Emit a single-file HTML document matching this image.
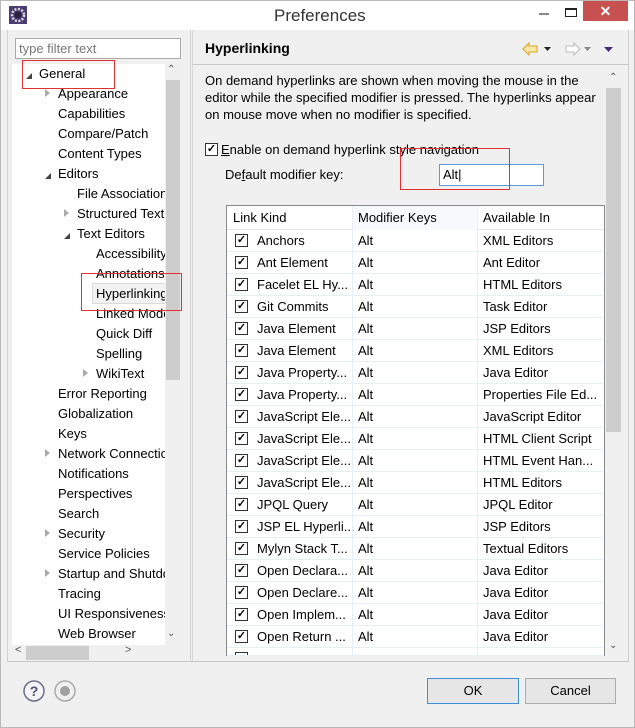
<!DOCTYPE html>
<html><head><meta charset="utf-8"><style>
*{margin:0;padding:0;box-sizing:border-box}
body{width:635px;height:728px;background:#f0f0f0;font-family:"Liberation Sans",sans-serif;font-size:13px;color:#000;position:relative;overflow:hidden}
.a{position:absolute;white-space:nowrap}
.t{position:absolute;white-space:nowrap;line-height:20px}
.cb{position:absolute;width:13px;height:13px;border:1px solid #333;background:#fff;font-size:11px;line-height:11px;text-align:center;font-weight:bold}
.row{position:absolute;left:227px;width:376px;height:22px;border-bottom:1px solid #e8eef6;background:#fff}
.row span{position:absolute;top:3px;white-space:nowrap}
.tri{position:absolute;width:0;height:0}
</style></head><body>
<!-- window border -->
<div class="a" style="left:0;top:0;width:635px;height:728px;border:1px solid #b9b9b9"></div>
<div class="a" style="left:1px;top:1px;width:633px;height:29px;background:#fff"></div>
<svg class="a" style="left:9px;top:6px" width="18" height="18"><rect x="0" y="0" width="18" height="18" fill="#4a3d73"/><circle cx="9" cy="9" r="6" fill="none" stroke="#ddd" stroke-width="2.5" stroke-dasharray="2 1.5"/><circle cx="9" cy="9" r="3.5" fill="#2b2240"/></svg>
<div class="a" style="left:274px;top:6px;font-size:17px;color:#333">Preferences</div>
<div class="a" style="left:539px;top:13px;width:10px;height:2px;background:#888"></div>
<div class="a" style="left:565px;top:8px;width:12px;height:9px;border:1px solid #222;border-top-width:2px"></div>
<div class="a" style="left:583px;top:1px;width:45px;height:20px;background:#c75050;color:#fff;text-align:center;font-size:14px;line-height:20px;font-weight:bold">✕</div>

<!-- left panel -->
<div class="a" style="left:7px;top:30px;width:184px;height:632px;border:1px solid #d0d0d0;border-top:none;background:#f0f0f0"></div>
<div class="a" style="left:15px;top:38px;width:166px;height:21px;border:1px solid #aaa;background:#fff;color:#777;padding-left:3px;line-height:19px;font-size:13px">type filter text</div>
<div class="a" style="left:12px;top:64px;width:153px;height:581px;background:#fff"></div>
<div class="a" style="left:165px;top:64px;width:16px;height:581px;background:#f0f0f0"></div>
<div class="a" style="left:166px;top:80px;width:14px;height:300px;background:#cdcdcd"></div>
<div class="a" style="left:167px;top:64px;font-size:10px;color:#555">⌃</div>
<div class="a" style="left:167px;top:628px;font-size:10px;color:#555">⌄</div>
<div class="a" style="left:12px;top:645px;width:169px;height:16px;background:#f0f0f0"></div>
<div class="a" style="left:26px;top:646px;width:63px;height:14px;background:#cdcdcd"></div>
<div class="a" style="left:15px;top:644px;font-size:11px;color:#555">&lt;</div>
<div class="a" style="left:125px;top:644px;font-size:11px;color:#555">&gt;</div>

<div style="position:absolute;left:12px;top:64px;width:153px;height:581px;overflow:hidden">
<div class="tri" style="left:14px;top:9px;border-left:6px solid transparent;border-bottom:6px solid #444"></div>
<div class="t" style="left:27px;top:0">General</div>
<div class="tri" style="left:33px;top:25px;border-left:5px solid #aaa;border-top:4px solid transparent;border-bottom:4px solid transparent"></div>
<div class="t" style="left:46px;top:20px">Appearance</div>
<div class="t" style="left:46px;top:40px">Capabilities</div>
<div class="t" style="left:46px;top:60px">Compare/Patch</div>
<div class="t" style="left:46px;top:80px">Content Types</div>
<div class="tri" style="left:33px;top:109px;border-left:6px solid transparent;border-bottom:6px solid #444"></div>
<div class="t" style="left:46px;top:100px">Editors</div>
<div class="t" style="left:65px;top:120px">File Associations</div>
<div class="tri" style="left:52px;top:145px;border-left:5px solid #aaa;border-top:4px solid transparent;border-bottom:4px solid transparent"></div>
<div class="t" style="left:65px;top:140px">Structured Text</div>
<div class="tri" style="left:52px;top:169px;border-left:6px solid transparent;border-bottom:6px solid #444"></div>
<div class="t" style="left:65px;top:160px">Text Editors</div>
<div class="t" style="left:84px;top:180px">Accessibility</div>
<div class="t" style="left:84px;top:200px">Annotations</div>
<div class="a" style="left:80px;top:219px;width:80px;height:21px;background:#f2f2f2;border:1px solid #dadada"></div>
<div class="t" style="left:84px;top:220px">Hyperlinking</div>
<div class="t" style="left:84px;top:240px">Linked Mode</div>
<div class="t" style="left:84px;top:260px">Quick Diff</div>
<div class="t" style="left:84px;top:280px">Spelling</div>
<div class="tri" style="left:71px;top:305px;border-left:5px solid #aaa;border-top:4px solid transparent;border-bottom:4px solid transparent"></div>
<div class="t" style="left:84px;top:300px">WikiText</div>
<div class="t" style="left:46px;top:320px">Error Reporting</div>
<div class="t" style="left:46px;top:340px">Globalization</div>
<div class="t" style="left:46px;top:360px">Keys</div>
<div class="tri" style="left:33px;top:385px;border-left:5px solid #aaa;border-top:4px solid transparent;border-bottom:4px solid transparent"></div>
<div class="t" style="left:46px;top:380px">Network Connections</div>
<div class="t" style="left:46px;top:400px">Notifications</div>
<div class="t" style="left:46px;top:420px">Perspectives</div>
<div class="t" style="left:46px;top:440px">Search</div>
<div class="tri" style="left:33px;top:465px;border-left:5px solid #aaa;border-top:4px solid transparent;border-bottom:4px solid transparent"></div>
<div class="t" style="left:46px;top:460px">Security</div>
<div class="t" style="left:46px;top:480px">Service Policies</div>
<div class="tri" style="left:33px;top:505px;border-left:5px solid #aaa;border-top:4px solid transparent;border-bottom:4px solid transparent"></div>
<div class="t" style="left:46px;top:500px">Startup and Shutdown</div>
<div class="t" style="left:46px;top:520px">Tracing</div>
<div class="t" style="left:46px;top:540px">UI Responsiveness</div>
<div class="t" style="left:46px;top:560px">Web Browser</div>
</div>
<div class="a" style="left:22px;top:60px;width:93px;height:29px;border:1px solid #e03030"></div>
<div class="a" style="left:81px;top:273px;width:101px;height:38px;border:1px solid #e03030"></div>

<!-- right panel -->
<div class="a" style="left:192px;top:30px;width:1px;height:632px;background:#d8d8d8"></div>
<div class="a" style="left:193px;top:30px;width:436px;height:632px;border-right:1px solid #d0d0d0"></div>
<div class="a" style="left:205px;top:40px;font-weight:bold;font-size:14px">Hyperlinking</div>
<div class="a" style="left:193px;top:64px;width:436px;height:1px;background:#c8c8c8"></div>
<svg class="a" style="left:521px;top:41px" width="100" height="16">
<path d="M2 8 L8 2 L8 5 L16 5 L16 11 L8 11 L8 14 Z" fill="#fde9a8" stroke="#d9a526"/>
<path d="M23 6 h7 l-3.5 4z" fill="#222"/>
<path d="M59 8 L53 2 L53 5 L45 5 L45 11 L53 11 L53 14 Z" fill="#fff" stroke="#bbb"/>
<path d="M63 6 h7 l-3.5 4z" fill="#888"/>
<path d="M83 6 h9 l-4.5 5z" fill="#4a2b7a"/>
</svg>
<div class="a" style="left:205px;top:72px;line-height:17px;width:400px;white-space:normal;overflow:hidden">On demand hyperlinks are shown when moving the mouse in the editor&nbsp;while the specified modifier is pressed. The hyperlinks appear on mouse move when no modifier is specified.</div>
<div class="cb" style="left:205px;top:143px">✓</div>
<div class="a" style="left:221px;top:142px"><u>E</u>nable on demand hyperlink style navigation</div>
<div class="a" style="left:225px;top:167px">De<u>f</u>ault modifier key:</div>
<div class="a" style="left:439px;top:164px;width:105px;height:22px;border:1px solid #5c9ad6;background:#fff;padding-left:3px;line-height:20px">Alt|</div>
<div class="a" style="left:400px;top:148px;width:110px;height:42px;border:1px solid #e03030"></div>

<!-- scrollbar right -->
<div class="a" style="left:605px;top:72px;width:17px;height:584px;background:#f0f0f0"></div>
<div class="a" style="left:606px;top:88px;width:15px;height:344px;background:#cdcdcd"></div>
<div class="a" style="left:609px;top:72px;font-size:10px;color:#555">⌃</div>
<div class="a" style="left:609px;top:640px;font-size:10px;color:#555">⌄</div>

<!-- table -->
<div class="a" style="left:226px;top:205px;width:379px;height:451px;border:1px solid #888;border-bottom:none;background:#fff;overflow:hidden">
<div class="a" style="left:0;top:0;width:377px;height:24px;background:#fff;border-bottom:1px solid #e5e5e5"></div>
<div class="a" style="left:6px;top:4px">Link Kind</div>
<div class="a" style="left:125px;top:0;width:1px;height:451px;background:#e8eef6"></div>
<div class="a" style="left:126px;top:0;width:124px;height:24px;background:#f7f9fc"></div>
<div class="a" style="left:131px;top:4px">Modifier Keys</div>
<div class="a" style="left:250px;top:0;width:1px;height:451px;background:#e8eef6"></div>
<div class="a" style="left:256px;top:4px">Available In</div>
</div>
<div id="rows"></div>
<script></script>
<div style="position:absolute;left:0;top:0">
</div>

<!-- rows (static) -->
<div style="position:absolute;left:0;top:0;width:0;height:0">
</div>
<div class="row" style="top:230px"><div class="cb" style="left:8px;top:4px">✓</div><span style="left:30px">Anchors</span><span style="left:131px">Alt</span><span style="left:256px">XML Editors</span></div>
<div class="row" style="top:252px"><div class="cb" style="left:8px;top:4px">✓</div><span style="left:30px">Ant Element</span><span style="left:131px">Alt</span><span style="left:256px">Ant Editor</span></div>
<div class="row" style="top:274px"><div class="cb" style="left:8px;top:4px">✓</div><span style="left:30px">Facelet EL Hy...</span><span style="left:131px">Alt</span><span style="left:256px">HTML Editors</span></div>
<div class="row" style="top:296px"><div class="cb" style="left:8px;top:4px">✓</div><span style="left:30px">Git Commits</span><span style="left:131px">Alt</span><span style="left:256px">Task Editor</span></div>
<div class="row" style="top:318px"><div class="cb" style="left:8px;top:4px">✓</div><span style="left:30px">Java Element</span><span style="left:131px">Alt</span><span style="left:256px">JSP Editors</span></div>
<div class="row" style="top:340px"><div class="cb" style="left:8px;top:4px">✓</div><span style="left:30px">Java Element</span><span style="left:131px">Alt</span><span style="left:256px">XML Editors</span></div>
<div class="row" style="top:362px"><div class="cb" style="left:8px;top:4px">✓</div><span style="left:30px">Java Property...</span><span style="left:131px">Alt</span><span style="left:256px">Java Editor</span></div>
<div class="row" style="top:384px"><div class="cb" style="left:8px;top:4px">✓</div><span style="left:30px">Java Property...</span><span style="left:131px">Alt</span><span style="left:256px">Properties File Ed...</span></div>
<div class="row" style="top:406px"><div class="cb" style="left:8px;top:4px">✓</div><span style="left:30px">JavaScript Ele...</span><span style="left:131px">Alt</span><span style="left:256px">JavaScript Editor</span></div>
<div class="row" style="top:428px"><div class="cb" style="left:8px;top:4px">✓</div><span style="left:30px">JavaScript Ele...</span><span style="left:131px">Alt</span><span style="left:256px">HTML Client Script</span></div>
<div class="row" style="top:450px"><div class="cb" style="left:8px;top:4px">✓</div><span style="left:30px">JavaScript Ele...</span><span style="left:131px">Alt</span><span style="left:256px">HTML Event Han...</span></div>
<div class="row" style="top:472px"><div class="cb" style="left:8px;top:4px">✓</div><span style="left:30px">JavaScript Ele...</span><span style="left:131px">Alt</span><span style="left:256px">HTML Editors</span></div>
<div class="row" style="top:494px"><div class="cb" style="left:8px;top:4px">✓</div><span style="left:30px">JPQL Query</span><span style="left:131px">Alt</span><span style="left:256px">JPQL Editor</span></div>
<div class="row" style="top:516px"><div class="cb" style="left:8px;top:4px">✓</div><span style="left:30px">JSP EL Hyperli...</span><span style="left:131px">Alt</span><span style="left:256px">JSP Editors</span></div>
<div class="row" style="top:538px"><div class="cb" style="left:8px;top:4px">✓</div><span style="left:30px">Mylyn Stack T...</span><span style="left:131px">Alt</span><span style="left:256px">Textual Editors</span></div>
<div class="row" style="top:560px"><div class="cb" style="left:8px;top:4px">✓</div><span style="left:30px">Open Declara...</span><span style="left:131px">Alt</span><span style="left:256px">Java Editor</span></div>
<div class="row" style="top:582px"><div class="cb" style="left:8px;top:4px">✓</div><span style="left:30px">Open Declare...</span><span style="left:131px">Alt</span><span style="left:256px">Java Editor</span></div>
<div class="row" style="top:604px"><div class="cb" style="left:8px;top:4px">✓</div><span style="left:30px">Open Implem...</span><span style="left:131px">Alt</span><span style="left:256px">Java Editor</span></div>
<div class="row" style="top:626px"><div class="cb" style="left:8px;top:4px">✓</div><span style="left:30px">Open Return ...</span><span style="left:131px">Alt</span><span style="left:256px">Java Editor</span></div>
<div class="row" style="top:648px;height:8px;overflow:hidden"><div class="cb" style="left:8px;top:4px"></div></div>
<div class="a" style="left:352px;top:230px;width:1px;height:426px;background:#e8eef6"></div>
<div class="a" style="left:477px;top:230px;width:1px;height:426px;background:#e8eef6"></div>

<!-- bottom -->
<div class="a" style="left:7px;top:661px;width:622px;height:1px;background:#c8c8c8"></div>
<svg class="a" style="left:22px;top:679px" width="55" height="24">
<circle cx="12" cy="12" r="10" fill="#f4f4f8" stroke="#6a6f88" stroke-width="1.5"/>
<text x="12" y="17" text-anchor="middle" font-family="Liberation Sans" font-weight="bold" font-size="14" fill="#4a5070">?</text>
<circle cx="43" cy="12" r="10" fill="#f0f0f0" stroke="#aaa" stroke-width="1.5"/>
<circle cx="43" cy="12" r="5" fill="#a0a0a0"/>
</svg>
<div class="a" style="left:427px;top:678px;width:92px;height:26px;border:1px solid #3c8fd8;background:#e6e6e6;text-align:center;line-height:24px">OK</div>
<div class="a" style="left:525px;top:678px;width:91px;height:26px;border:1px solid #acacac;background:#e6e6e6;text-align:center;line-height:24px">Cancel</div>
</body></html>
